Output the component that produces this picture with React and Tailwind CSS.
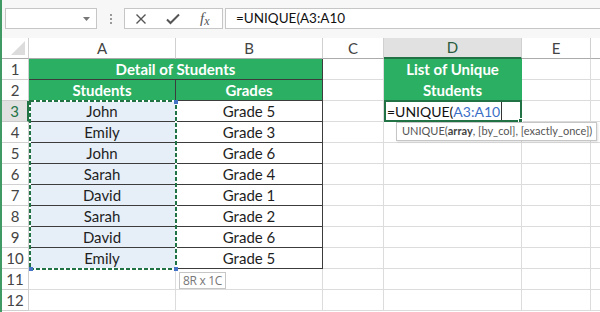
import React from 'react';

const data = [
  ['John', 'Grade 5'],
  ['Emily', 'Grade 3'],
  ['John', 'Grade 6'],
  ['Sarah', 'Grade 4'],
  ['David', 'Grade 1'],
  ['Sarah', 'Grade 2'],
  ['David', 'Grade 6'],
  ['Emily', 'Grade 5'],
];

const rh = 'flex items-center justify-center border-r border-b border-[#d0d0d0] text-[15px] text-[#444] bg-white';
const plain = 'border-r border-b border-[#dcdcdc]';
const green = 'flex items-center justify-center bg-[#2bb063] text-white font-bold text-[15px] border-r border-b border-[#3c3c3c]';
const cellA = 'relative flex items-center justify-center bg-[#e6eef8] border-r border-b border-[#3c3c3c] text-[15px] text-[#1e1e1e]';
const cellB = 'flex items-center justify-center bg-white border-r border-b border-[#3c3c3c] text-[15px] text-[#1e1e1e]';
const colH = 'flex items-center justify-center border-r border-b border-[#d0d0d0] border-b-[#ababab] text-[15px] text-[#444] bg-white';

function Selection() {
  return (
    <svg className="absolute left-0 top-[-1px] z-10 pointer-events-none" width="149" height="171" viewBox="0 0 149 171">
      <rect x="1" y="1" width="146" height="168" fill="none" stroke="#ffffff" strokeWidth="2" />
      <rect x="1" y="1" width="146" height="168" fill="none" stroke="#217346" strokeWidth="2" strokeDasharray="4 2" />
      <rect x="145" y="0" width="4" height="4" fill="#4472c4" />
      <rect x="0" y="167" width="4" height="4" fill="#4472c4" />
      <rect x="145" y="167" width="4" height="4" fill="#4472c4" />
    </svg>
  );
}

export default function App() {
  const rows = [];
  data.forEach((d, i) => {
    const r = i + 3;
    rows.push(
      <React.Fragment key={r}>
        {r === 3 ? (
          <div className="flex items-center justify-center border-r-2 border-r-[#217346] border-b border-[#c8c8c8] text-[15px] text-[#217346] bg-[#e1e1e1]">{r}</div>
        ) : (
          <div className={rh}>{r}</div>
        )}
        <div className={cellA}>
          {r === 3 && <Selection />}
          {d[0]}
        </div>
        <div className={cellB}>{d[1]}</div>
        <div className={plain}></div>
        {r === 3 ? (
          <div className="relative z-20 flex items-center border-2 border-[#217346] bg-white -mt-[1px] pl-[1px] text-[14px] text-[#111] whitespace-nowrap">
            <span>=UNIQUE(</span>
            <span className="text-[#3b6fc7]">A3:A10</span>
            <span className="ml-[1px] w-[1px] h-[18px] bg-[#333]"></span>
            <span className="absolute right-[-3px] bottom-[-3px] w-[5px] h-[5px] bg-[#217346] border border-white"></span>
            <div className="absolute left-[10px] top-[20px] w-[201px] h-[19px] bg-white border border-[#c6c6c6] shadow-[1px_1px_2px_rgba(0,0,0,0.12)] flex items-center pl-[5px] text-[11px] text-[#555] whitespace-nowrap">
              UNIQUE(<span className="font-bold text-[#444]">array</span>, [by_col], [exactly_once])
            </div>
          </div>
        ) : (
          <div className={plain}></div>
        )}
        <div className={plain}></div>
        <div className={plain}></div>
      </React.Fragment>
    );
  });

  return (
    <div className="w-[600px] h-[312px] overflow-hidden border-l-2 border-[#3f9a63] bg-white font-['Lato',sans-serif]">
      {/* formula bar */}
      <div className="h-[38px] flex items-start pt-[8px] bg-[#f7f7f7]">
        <div className="ml-[3px] w-[92px] h-[21px] bg-white border border-[#c6c6c6] flex items-center justify-end pr-[6px]">
          <svg width="7" height="4" viewBox="0 0 7 4"><path d="M0 0h7L3.5 4z" fill="#777" /></svg>
        </div>
        <div className="w-[27px] h-[21px] flex flex-col items-center justify-center gap-[2px]">
          <span className="w-[2px] h-[2px] bg-[#9a9a9a]"></span>
          <span className="w-[2px] h-[2px] bg-[#9a9a9a]"></span>
          <span className="w-[2px] h-[2px] bg-[#9a9a9a]"></span>
        </div>
        <div className="w-[99px] h-[21px] bg-white border border-[#c6c6c6] flex items-center">
          <div className="w-[33px] flex justify-center">
            <svg width="12" height="12" viewBox="0 0 12 12"><path d="M1.5 1.5l9 9M10.5 1.5l-9 9" stroke="#555" strokeWidth="1.4" /></svg>
          </div>
          <div className="w-[31px] flex justify-center">
            <svg width="14" height="12" viewBox="0 0 14 12"><path d="M1 6.5l3.5 3.5L13 1.5" fill="none" stroke="#555" strokeWidth="2" /></svg>
          </div>
          <div className="w-[35px] flex justify-center items-center font-['Liberation_Serif',serif] italic text-[15px] text-[#555] leading-none">
            f<span className="text-[12px] mt-[4px]">x</span>
          </div>
        </div>
        <div className="ml-[2px] flex-1 h-[21px] bg-white border border-[#c6c6c6] border-r-0 flex items-center pl-[10px] text-[13.5px] text-[#111]">
          =UNIQUE(A3:A10
        </div>
      </div>

      {/* sheet grid */}
      <div className="grid grid-cols-[27px_147px_147px_61px_138px_69px_80px] grid-rows-[repeat(13,21px)]">
        {/* header row */}
        <div className="relative border-r border-b border-[#d0d0d0] border-b-[#ababab] bg-white">
          <svg className="absolute right-[3px] bottom-[3px]" width="14" height="14" viewBox="0 0 14 14"><path d="M14 0V14H0z" fill="#dcdcdc" /></svg>
        </div>
        <div className={colH}>A</div>
        <div className={colH}>B</div>
        <div className={colH}>C</div>
        <div className="flex items-center justify-center border-r border-[#d0d0d0] border-b-2 border-b-[#217346] text-[15px] text-[#285c3c] bg-[#e1e1e1]">D</div>
        <div className={colH}>E</div>
        <div className={colH}></div>

        {/* row 1 */}
        <div className={rh}>1</div>
        <div className={`${green} col-span-2`}>Detail of Students</div>
        <div className={plain}></div>
        <div className="row-span-2 flex items-center justify-center text-center bg-[#2bb063] text-white font-bold text-[15px] leading-[21px] border-r border-b border-[#2bb063]">
          List of Unique<br />Students
        </div>
        <div className={plain}></div>
        <div className={plain}></div>

        {/* row 2 */}
        <div className={rh}>2</div>
        <div className={green}>Students</div>
        <div className={green}>Grades</div>
        <div className={plain}></div>
        <div className={plain}></div>
        <div className={plain}></div>

        {rows}

        {/* row 11 */}
        <div className={rh}>11</div>
        <div className={plain}></div>
        <div className={`${plain} relative`}>
          <div className="absolute left-[3px] top-[3px] h-[17px] px-[3px] bg-white border border-[#c6c6c6] flex items-center text-[12px] text-[#777] font-['Open_Sans',sans-serif] tracking-[-0.3px]">
            8R x 1C
          </div>
        </div>
        <div className={plain}></div>
        <div className={plain}></div>
        <div className={plain}></div>
        <div className={plain}></div>

        {/* row 12 */}
        <div className={rh}>12</div>
        <div className={plain}></div>
        <div className={plain}></div>
        <div className={plain}></div>
        <div className={plain}></div>
        <div className={plain}></div>
        <div className={plain}></div>
      </div>
    </div>
  );
}
